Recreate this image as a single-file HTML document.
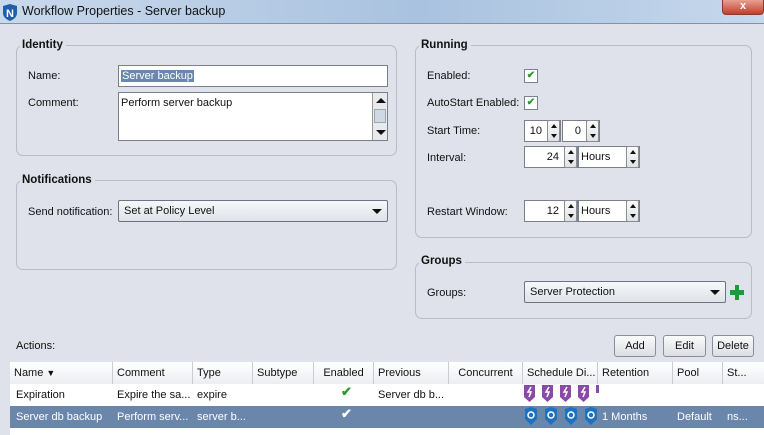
<!DOCTYPE html>
<html><head><meta charset="utf-8"><style>
*{box-sizing:border-box;margin:0;padding:0}
body{width:764px;height:435px;overflow:hidden;background:#dfe2ea;font-family:"Liberation Sans",Arial,sans-serif;font-size:11px;color:#111;position:relative}
.a{position:absolute}
.title{left:0;top:0;width:764px;height:24px;background:linear-gradient(90deg,#c9d9ec,#a9c2df 55%,#c6d8ec);border-bottom:1px solid #7f93ab}
.box{position:absolute;border:1px solid #b8bcc4;border-radius:7px}
.leg{position:absolute;font-weight:bold;background:#dfe2ea;padding:0 3px 0 2px;font-size:11.5px}
.inp{position:absolute;background:#fff;border:1px solid #7a7f88}
.combo{position:absolute;border:1px solid #6f7580;border-radius:2px;background:linear-gradient(#f7f8fa,#dfe2e8);padding:4px 5px}
.tri{position:absolute;width:0;height:0;border-left:5px solid transparent;border-right:5px solid transparent;border-top:5px solid #111}
.cb{position:absolute;width:14px;height:14px;border:1px solid #7a8290;background:#fff;color:#2a9a2a;font-size:10px;line-height:12px;text-align:center;font-weight:bold}
.btn{position:absolute;border:1px solid #8a8e96;border-radius:3px;background:linear-gradient(#fbfbfc,#dcdee3);text-align:center;line-height:20px;height:22px}
.sp{position:absolute;width:13px;border:1px solid #8a8e96;background:linear-gradient(#fafafa,#e0e2e6);border-radius:2px}
.sp i{display:block;height:50%;position:relative}
.sp i:first-child:after{content:"";position:absolute;left:3px;top:3px;border-left:3px solid transparent;border-right:3px solid transparent;border-bottom:4px solid #111}
.sp i:last-child:after{content:"";position:absolute;left:3px;top:3px;border-left:3px solid transparent;border-right:3px solid transparent;border-top:4px solid #111}
.hd{position:absolute;top:362px;height:22px;line-height:22px;border-right:1px solid #c8cbd2;padding-left:4px;white-space:nowrap;overflow:hidden}
.c{position:absolute;height:22px;line-height:22px;padding-left:4px;white-space:nowrap}
</style></head><body>
<div class="a title"></div>
<svg class="a" style="left:2px;top:4px" width="16" height="17" viewBox="0 0 16 17"><path d="M1 2 L8 0 L15 2 L15 9 Q15 14 8 17 Q1 14 1 9Z" fill="#1d5fa8"/><text x="4" y="13" font-size="11" font-weight="bold" fill="#fff" font-family="Liberation Sans">N</text></svg>
<div class="a" style="left:22px;top:4px;font-size:12.5px">Workflow Properties - Server backup</div>
<div class="a" style="left:722px;top:0;width:42px;height:15px;background:linear-gradient(#e8a090,#c0402a);border:1px solid #8a3a2e;border-top:none;border-radius:0 0 4px 4px;color:#fff;text-align:center;font-weight:bold;font-size:11px;line-height:13px">x</div>

<div class="box" style="left:16px;top:45px;width:381px;height:111px"></div>
<div class="leg" style="left:20px;top:39px">Identity</div>
<div class="a" style="left:28px;top:70px">Name:</div>
<div class="inp" style="left:118px;top:65px;width:270px;height:22px"><span style="position:absolute;left:2px;top:4px;background:#6a87ad;color:#fff;padding:0 1px">Server backup</span></div>
<div class="a" style="left:28px;top:97px">Comment:</div>
<div class="inp" style="left:118px;top:92px;width:270px;height:49px;padding:4px 2px">Perform server backup
<div class="a" style="right:0;top:0;width:15px;height:47px;background:#e8eaee;border-left:1px solid #999"><div class="tri" style="left:3px;top:5px;transform:rotate(180deg)"></div><div class="a" style="left:1px;top:16px;width:12px;height:14px;background:#cfd8e4;border:1px solid #9aa"></div><div class="tri" style="left:3px;top:37px"></div></div></div>

<div class="box" style="left:16px;top:180px;width:381px;height:90px"></div>
<div class="leg" style="left:20px;top:174px">Notifications</div>
<div class="a" style="left:28px;top:206px">Send notification:</div>
<div class="combo" style="left:118px;top:200px;width:270px;height:22px">Set at Policy Level<div class="tri" style="right:5px;top:8px"></div></div>

<div class="box" style="left:415px;top:45px;width:337px;height:193px"></div>
<div class="leg" style="left:419px;top:39px">Running</div>
<div class="a" style="left:427px;top:70px">Enabled:</div>
<div class="cb" style="left:524px;top:69px">✔</div>
<div class="a" style="left:427px;top:97px">AutoStart Enabled:</div>
<div class="cb" style="left:524px;top:96px">✔</div>
<div class="a" style="left:427px;top:125px">Start Time:</div>
<div class="inp" style="left:524px;top:120px;width:37px;height:22px;text-align:right;padding:4px 18px 0 0">10</div><div class="sp" style="left:547px;top:120px;height:22px"><i></i><i></i></div>
<div class="inp" style="left:562px;top:120px;width:38px;height:22px;text-align:right;padding:4px 18px 0 0">0</div><div class="sp" style="left:586px;top:120px;height:22px"><i></i><i></i></div>
<div class="a" style="left:427px;top:152px">Interval:</div>
<div class="inp" style="left:524px;top:146px;width:54px;height:22px;text-align:right;padding:4px 18px 0 0">24</div><div class="sp" style="left:564px;top:146px;height:22px"><i></i><i></i></div>
<div class="inp" style="left:578px;top:146px;width:62px;height:22px;padding:4px 2px">Hours</div><div class="sp" style="left:626px;top:146px;height:22px"><i></i><i></i></div>
<div class="a" style="left:427px;top:206px">Restart Window:</div>
<div class="inp" style="left:524px;top:200px;width:54px;height:22px;text-align:right;padding:4px 18px 0 0">12</div><div class="sp" style="left:564px;top:200px;height:22px"><i></i><i></i></div>
<div class="inp" style="left:578px;top:200px;width:62px;height:22px;padding:4px 2px">Hours</div><div class="sp" style="left:626px;top:200px;height:22px"><i></i><i></i></div>

<div class="box" style="left:415px;top:262px;width:337px;height:57px"></div>
<div class="leg" style="left:419px;top:255px">Groups</div>
<div class="a" style="left:427px;top:287px">Groups:</div>
<div class="combo" style="left:524px;top:281px;width:202px;height:22px">Server Protection<div class="tri" style="right:5px;top:8px"></div></div>
<div class="a" style="left:735px;top:285px;width:4px;height:15px;background:#1f9a3a"></div><div class="a" style="left:730px;top:290px;width:14px;height:5px;background:#1f9a3a"></div>

<div class="a" style="left:16px;top:340px">Actions:</div>
<div class="btn" style="left:614px;top:335px;width:42px">Add</div>
<div class="btn" style="left:663px;top:335px;width:43px">Edit</div>
<div class="btn" style="left:712px;top:335px;width:42px">Delete</div>

<div class="a" style="left:10px;top:362px;width:754px;height:73px;background:#fff"></div>
<div class="a" style="left:10px;top:362px;width:754px;height:22px;background:linear-gradient(#ffffff,#eceef2)"></div>
<div class="hd" style="left:10px;width:103px">Name <span style="font-size:9px">▼</span></div>
<div class="hd" style="left:113px;width:80px">Comment</div>
<div class="hd" style="left:193px;width:60px">Type</div>
<div class="hd" style="left:253px;width:61px">Subtype</div>
<div class="hd" style="left:314px;width:60px;text-align:center;padding:0">Enabled</div>
<div class="hd" style="left:374px;width:75px">Previous</div>
<div class="hd" style="left:449px;width:74px;text-align:center;padding:0">Concurrent</div>
<div class="hd" style="left:523px;width:75px">Schedule Di...</div>
<div class="hd" style="left:598px;width:75px">Retention</div>
<div class="hd" style="left:673px;width:50px">Pool</div>
<div class="hd" style="left:723px;width:41px;border:none">St...</div>

<div class="c" style="left:12px;top:384px">Expiration</div>
<div class="c" style="left:113px;top:384px">Expire the sa...</div>
<div class="c" style="left:193px;top:384px">expire</div>
<div class="c" style="left:337px;top:381px;color:#2a9a2a;font-weight:bold;font-size:13px">✔</div>
<div class="c" style="left:374px;top:384px">Server db b...</div>
<svg class="a" style="left:524px;top:385px" width="76" height="18"><g fill="#8a4aa8"><path d="M0 0h11v12l-5.5 5l-5.5-5z"/><path d="M18 0h11v12l-5.5 5l-5.5-5z"/><path d="M36 0h11v12l-5.5 5l-5.5-5z"/><path d="M54 0h11v12l-5.5 5l-5.5-5z"/><path d="M72 0h3v8l-3 0z"/></g><g stroke="#fff" stroke-width="1.5" fill="none"><path d="M7 2l-3 5h3l-2 5"/><path d="M25 2l-3 5h3l-2 5"/><path d="M43 2l-3 5h3l-2 5"/><path d="M61 2l-3 5h3l-2 5"/></g></svg>

<div class="a" style="left:10px;top:406px;width:754px;height:22px;background:#6a86ab"></div>
<div class="c" style="left:12px;top:406px;color:#fff">Server db backup</div>
<div class="c" style="left:113px;top:406px;color:#fff">Perform serv...</div>
<div class="c" style="left:193px;top:406px;color:#fff">server b...</div>
<div class="c" style="left:337px;top:403px;color:#fff;font-weight:bold;font-size:13px">✔</div>
<svg class="a" style="left:525px;top:407px" width="76" height="19"><g fill="#1a72c0"><path d="M0 2l6-2l6 2v10l-6 6l-6-6z"/><path d="M20 2l6-2l6 2v10l-6 6l-6-6z"/><path d="M40 2l6-2l6 2v10l-6 6l-6-6z"/><path d="M60 2l6-2l6 2v10l-6 6l-6-6z"/></g><g fill="none" stroke="#fff" stroke-width="1.5"><circle cx="6" cy="8" r="3"/><circle cx="26" cy="8" r="3"/><circle cx="46" cy="8" r="3"/><circle cx="66" cy="8" r="3"/></g></svg>
<div class="c" style="left:598px;top:406px;color:#fff">1 Months</div>
<div class="c" style="left:673px;top:406px;color:#fff">Default</div>
<div class="c" style="left:723px;top:406px;color:#fff">ns...</div>
</body></html>
